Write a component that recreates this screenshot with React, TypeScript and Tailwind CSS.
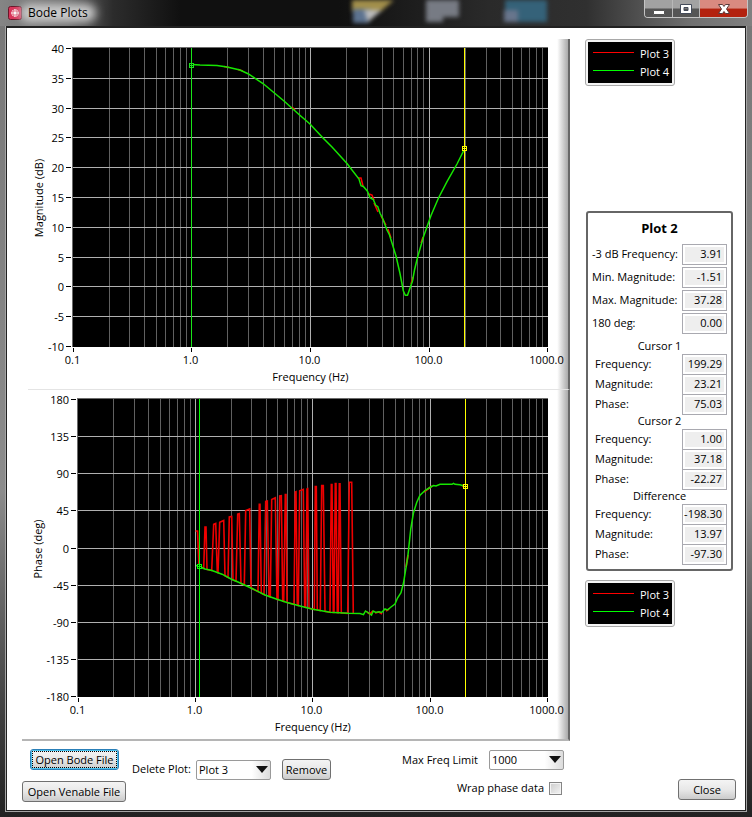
import type { ReactNode } from "react";

type Point = [number, number];

interface Cursor {
  x: number;
  y: number;
  color: string;
}

interface ChartProps {
  label: string;
  viewBox: string;
  left: number;
  decade: number;
  top: number;
  bottom: number;
  yLabels: number[];
  yTitle: { text: string; x: number; y: number };
  cursors: Cursor[];
  children: ReactNode;
}

const X_LABELS = ["0.1", "1.0", "10.0", "100.0", "1000.0"];

const MAGNITUDE: Point[] = [
  [192, 64.5], [200, 65], [217, 65.5], [227, 67], [240, 70], [248, 73.7], [263, 83.5], [284, 101],
  [299, 114.5], [310, 124], [323, 138], [332, 147], [347, 163.5], [359, 179], [361, 185.7], [363.3, 186.5],
  [367.3, 191], [370, 197.7], [373.3, 199.5], [375.7, 205.3], [377.7, 206.5], [380, 213.3], [382.5, 218],
  [387, 230], [389.5, 235], [396, 256], [400, 273.5], [403.3, 290.7], [405.3, 295.3], [407.5, 295.3],
  [409, 291], [412.5, 281], [414.5, 270], [417.5, 257.5], [423.5, 236.7], [431, 215.5], [438.5, 198],
  [447, 181.7], [457, 164], [464, 150],
];

const PHASE: Point[] = [
  [196, 565.5], [199.5, 566.5], [205, 569], [212, 570.5], [222, 574.2], [232, 579.5], [238, 582], [252, 588.5],
  [265, 595], [277, 599.3], [287, 602.5], [300, 606], [313, 609.2], [330, 612.2], [348, 613.3], [360, 613.5],
  [363.5, 614.7], [365.5, 611], [368.5, 613], [371.5, 615], [373.2, 611], [376, 612.5], [379, 611.7], [381.7, 612.5],
  [385, 609], [387.5, 610], [391, 607], [395, 604], [397.5, 598], [401, 592.7], [403.5, 583], [407.8, 556.7],
  [410.8, 528.5], [413.5, 512.7], [416.7, 502.5], [420, 495.3], [425, 490.5], [430.7, 487], [433.5, 485.5],
  [436, 486], [440, 484.3], [452, 484.3], [453.5, 483.3], [455, 484.3], [460, 484.7], [464, 486],
];

// rise start, top left, top right, fall end, y of top left, y of top right
const SPIKES = [
  [203.7, 205, 206, 207, 527, 527],
  [211.7, 213.7, 215.7, 217.3, 524.3, 523.5],
  [218, 219.7, 223.7, 225, 522.3, 520.5],
  [228, 229.3, 231.7, 233, 517, 516.5],
  [236, 237.7, 239.3, 241, 514, 513.5],
  [244.3, 245.7, 249.7, 251, 510.5, 509],
  [258, 259.3, 260, 261.3, 504.3, 504.3],
  [264, 265.7, 267.3, 269, 501.3, 501],
  [270.3, 271.7, 275.3, 277, 499.5, 497.7],
  [278, 279.7, 281.3, 282.7, 496, 495.7],
  [283.7, 285.3, 286, 287, 494.5, 494.5],
  [294, 295.3, 296, 297.3, 492, 491.7],
  [298.3, 299.7, 303.3, 304.7, 490.7, 489.3],
  [305.7, 307, 307.7, 309, 489, 488.7],
  [314.3, 315.3, 316.3, 317.3, 486.5, 486.5],
  [320.3, 321.7, 323.3, 325, 485.5, 485.5],
  [330, 331.3, 332, 333.3, 484.5, 484.5],
  [334, 335.3, 336, 337.3, 483.5, 483.5],
  [338.3, 339.3, 340, 341.3, 483.7, 483.7],
  [347.7, 349.3, 351.7, 353.3, 482.3, 482.3],
];

function toPoints(points: Point[]) {
  return points.map(p => p.join(",")).join(" ");
}

function valueAt(points: Point[], x: number) {
  const i = Math.max(1, points.findIndex(p => p[0] >= x));
  const [x0, y0] = points[i - 1];
  const [x1, y1] = points[i];
  return y0 + ((x - x0) / (x1 - x0)) * (y1 - y0);
}

const WRAPPED: Point[] = [
  [195.5, 531],
  [197.5, 531],
  [199, 566],
  ...SPIKES.flatMap(([a, b, c, d, y0, y1]): Point[] => [
    [a, valueAt(PHASE, a)],
    [b, y0],
    [c, y1],
    [d, valueAt(PHASE, d)],
  ]),
];

function Chart({ label, viewBox, left, decade, top, bottom, yLabels, yTitle, cursors, children }: ChartProps) {
  const right = 548;
  const px = (v: number) => Math.floor(v) + 0.5;
  const tickX = (i: number) => px(left + decade * i);
  const tickY = (i: number) => px(top + ((bottom - top - 1) * i) / (yLabels.length - 1) + 0.5);
  const minor = [0, 1, 2, 3].flatMap(d => [2, 3, 4, 5, 6, 7, 8, 9].map(n => px(left + decade * (d + Math.log10(n)) + 0.3)));

  return (
    <svg viewBox={viewBox} role="img" aria-label={label} className="block w-full font-['Open_Sans',sans-serif] text-[11px]">
      <g shapeRendering="crispEdges">
        <rect x={left - 1} y={top - 1} width={right - left + 1} height={bottom - top + 1} fill="#6b6b6b" />
        <rect x={left} y={top} width={right - left} height={bottom - top} fill="#000" />
        <g stroke="#606060">
          {minor.map(x => <line key={x} x1={x} x2={x} y1={top} y2={bottom} />)}
        </g>
        <g stroke="#b0b0b0">
          {[1, 2, 3].map(i => <line key={i} x1={tickX(i)} x2={tickX(i)} y1={top} y2={bottom} />)}
          {yLabels.slice(1, -1).map((v, i) => <line key={v} x1={left} x2={right} y1={tickY(i + 1)} y2={tickY(i + 1)} />)}
        </g>
        <g stroke="#000">
          {X_LABELS.map((t, i) => <line key={t} x1={tickX(i)} x2={tickX(i)} y1={bottom + 1} y2={bottom + 5} />)}
          {yLabels.map((v, i) => <line key={v} x1={left - 7} x2={left - 2} y1={tickY(i)} y2={tickY(i)} />)}
        </g>
      </g>
      {children}
      <g shapeRendering="crispEdges" fill="none">
        {cursors.map(c => (
          <g key={c.color} stroke={c.color}>
            <line x1={c.x} x2={c.x} y1={top} y2={bottom} />
            <rect x={c.x - 2} y={c.y - 2} width="4" height="4" fill="#000" />
            <path d={`M${c.x - 2} ${c.y}h4M${c.x} ${c.y - 2}v4`} />
          </g>
        ))}
      </g>
      <g textAnchor="end">
        {yLabels.map((v, i) => <text key={v} x={left - 9} y={tickY(i) + 4}>{v}</text>)}
      </g>
      <g textAnchor="middle">
        {X_LABELS.map((t, i) => <text key={t} x={tickX(i) - 1} y={bottom + 17}>{t}</text>)}
        <text x={left + decade * 2} y={bottom + 34}>Frequency (Hz)</text>
        <text transform={`translate(${yTitle.x} ${yTitle.y}) rotate(-90)`}>{yTitle.text}</text>
      </g>
    </svg>
  );
}

function Legend() {
  return (
    <ul className="w-[90px] rounded-[3px] border border-[#a8a8a8] bg-[#f4f4f4] p-[2px] text-[11px] leading-[18px] text-white">
      <li className="flex items-center gap-[6px] bg-black pt-[3px] pl-[5px]">
        <span className="mb-[3px] h-px w-[41px] bg-[#ff0000]" />
        Plot 3
      </li>
      <li className="flex items-center gap-[6px] bg-black pb-[2px] pl-[5px]">
        <span className="mb-[3px] h-px w-[41px] bg-[#00ff00]" />
        Plot 4
      </li>
    </ul>
  );
}

function Reading({ id, label, value }: { id: string; label: string; value: string }) {
  return (
    <div className="flex h-5 items-center justify-between">
      <label htmlFor={id} className="whitespace-nowrap">{label}</label>
      <output id={id} className="h-[21px] w-[45px] shrink-0 border border-[#a9a9b0] bg-white p-[2px]">
        <span className="flex h-full items-center justify-end bg-[#eeeeee] pr-[2px]">{value}</span>
      </output>
    </div>
  );
}

function Readings({ title, values }: { title: string; values: [string, string, string] }) {
  const names = ["Frequency:", "Magnitude:", "Phase:"];
  return (
    <section>
      <h3 className="h-[15px] text-center leading-[13px]">{title}</h3>
      <div className="pl-[3px]">
        {names.map((name, i) => <Reading key={name} id={`${title}-${name}`} label={name} value={values[i]} />)}
      </div>
    </section>
  );
}

function PushButton({ children, className = "border-[#707070]" }: { children: ReactNode; className?: string }) {
  return (
    <button
      type="button"
      className={`h-[21px] rounded-[3px] border bg-linear-to-b from-[#f4f4f4] via-[#e8e8e8] to-[#cbcbcb] text-center leading-[18px] whitespace-nowrap ${className}`}
    >
      {children}
    </button>
  );
}

function DropDown({ id, options }: { id: string; options: string[] }) {
  return (
    <span className="relative block h-5 w-[75px]">
      <select id={id} className="h-full w-full appearance-none rounded-[2px] border border-[#9a9a9a] bg-linear-to-r from-white from-75% to-[#dcdcdc] pl-[2px] leading-[18px]">
        {options.map(o => <option key={o}>{o}</option>)}
      </select>
      <svg viewBox="0 0 12 7" className="pointer-events-none absolute top-[6px] right-[3px] h-[7px] w-3">
        <path d="M0 0h12L6 7z" fill="#111" />
      </svg>
    </span>
  );
}

function TitleBar() {
  return (
    <header className="relative flex h-[26px] items-center overflow-hidden bg-[linear-gradient(to_right,#858585_0%,#6a6a6a_9%,#2c2c2c_15%,#101010_24%,#101010_45%,#2a2a2a_65%,#303030_78%,#707070_92%,#808080_100%)] pl-2">
      <div className="absolute inset-y-0 left-[350px] w-[210px] blur-[2px]">
        <svg viewBox="0 0 210 26" className="h-[26px] w-[210px]">
          <path d="M2 0h42L30 12H2z" fill="#a28f4b" />
          <path d="M3 9h18l-2 14H3z" fill="#5d7390" />
          <path d="M14 10h18L18 22z" fill="#bcbcbc" />
          <path d="M76 0h33v17H93v5H76z" fill="#777b84" />
          <path d="M155 0h42v22h-42z" fill="#356279" />
          <path d="M154 10h14v12h-14z" fill="#68758c" />
        </svg>
      </div>
      <svg viewBox="0 0 14 14" className="mr-[6px] h-[14px] w-[14px]">
        <rect x=".5" y=".5" width="13" height="13" rx="2" fill="#d9355a" stroke="#6b1528" />
        <circle cx="7" cy="7" r="3.500" fill="#e88296" stroke="#f6c9d1" strokeDasharray="1.5 1" />
        <path d="M7 3v8M3 7h8" stroke="#f9dce1" />
        <circle cx="7" cy="7" r="1.200" fill="#fff" />
      </svg>
      <div className="relative">
        <div className="absolute -inset-x-2 -inset-y-px rounded-full bg-[#cccccc] blur-[5px]" />
        <h1 className="relative text-xs leading-4">Bode Plots</h1>
      </div>
      <div className="absolute top-0 right-1 flex h-[18px] w-[104px] overflow-hidden rounded-b-[4px] border border-t-0 border-[#c4c4c4]">
        <button type="button" aria-label="Minimize" className="flex w-7 items-center justify-center border-r border-[#b8b8b8] bg-linear-to-b from-[#a2a2a2] from-45% to-[#555555] to-55%">
          <svg viewBox="0 0 12 14" className="h-[14px] w-3"><rect x=".5" y="8.5" width="11" height="4" rx=".5" fill="#fff" stroke="#555" /></svg>
        </button>
        <button type="button" aria-label="Maximize" className="flex w-[27px] items-center justify-center border-r border-[#b8b8b8] bg-linear-to-b from-[#a2a2a2] from-45% to-[#555555] to-55%">
          <svg viewBox="0 0 12 12" className="h-3 w-3">
            <path fillRule="evenodd" d="M.5 1.5h11v9H.5zM4 4.500h4v3H4z" fill="#fff" stroke="#444b5a" />
          </svg>
        </button>
        <button type="button" aria-label="Close window" className="flex flex-1 items-center justify-center bg-linear-to-b from-[#d98a80] from-45% to-[#b3220f] to-55%">
          <svg viewBox="0 0 14 12" className="h-3 w-[14px]">
            <path d="M1.500 1.500h4L7 3.500 8.500 1.500h4L9.500 6l3 4.500h-4L7 8.500l-1.500 2h-4L4.500 6z" fill="#fff" stroke="#5b3a3a" />
          </svg>
        </button>
      </div>
    </header>
  );
}

export default function App() {
  return (
    <div className="flex min-h-screen flex-col bg-linear-to-b from-[#777777] via-[#8c8c8c] via-60% to-[#222222] font-['Open_Sans',sans-serif] text-[11px] text-black">
      <TitleBar />
      <main className="mx-[6px] mb-[6px] flex flex-1 flex-col border border-t-2 border-[#222222] bg-white pl-[15px] outline outline-[#a5a5a5]">
        <div className="flex pt-[11px]">
          <div className="min-w-0 flex-1">
            <div className="ml-[6px] border-r-2 border-b border-r-[#686868] border-b-[#e4e4e4] bg-linear-to-r from-white from-98% to-[#aaaaaa]">
              <Chart
                label="Magnitude against frequency"
                viewBox="28 39 540 350"
                left={73}
                decade={118.7}
                top={48}
                bottom={347}
                yLabels={[40, 35, 30, 25, 20, 15, 10, 5, 0, -5, -10]}
                yTitle={{ text: "Magnitude (dB)", x: 43, y: 198 }}
                cursors={[
                  { x: 191.5, y: 65.5, color: "#19e619" },
                  { x: 464.5, y: 148.5, color: "#ffff00" },
                ]}
              >
                <g fill="none" strokeWidth="1.5">
                  <path d="M224 66.500l5 1M238 69.500l5 1.500M292 107l3 3M358 178h3l2 8M369 194l3 1 2 5M374 203l4 9M381 216l5 9M388 229l3 9M411 284l2-7M421 243l2-6" stroke="#f00" />
                  <polyline points={toPoints(MAGNITUDE)} stroke="#16e600" />
                </g>
              </Chart>
            </div>
            <div className="border-r-2 border-b-2 border-r-[#686868] border-b-[#b5b5b5] bg-linear-to-r from-white from-98% to-[#aaaaaa]">
              <Chart
                label="Phase against frequency"
                viewBox="22 390 546 349"
                left={78}
                decade={117.4}
                top={399}
                bottom={697}
                yLabels={[180, 135, 90, 45, 0, -45, -90, -135, -180]}
                yTitle={{ text: "Phase (deg)", x: 42, y: 549 }}
                cursors={[
                  { x: 199.5, y: 566.5, color: "#00ff00" },
                  { x: 465.5, y: 486.5, color: "#ffff00" },
                ]}
              >
                <g fill="none">
                  <polyline points={toPoints(WRAPPED)} stroke="#ee0000" strokeWidth="1.6" />
                  <path d="M367 612l3 2 3-3M375 613l4-1 3 2M386 611l3-2M406 567l2-12M424 492l8-6M462 485l2 2" stroke="#f00" strokeWidth="1.8" />
                  <polyline points={toPoints(PHASE)} stroke="#16e600" strokeWidth="1.5" />
                </g>
              </Chart>
            </div>
          </div>

          <aside className="w-[175px] shrink-0 pr-[12px] pl-[15px]">
            <Legend />
            <div className="mt-[125px] mb-[9px] ml-px rounded-[3px] border-2 border-[#666666] bg-white pt-[5px] pr-[4px] pb-[5px] pl-[4px]">
              <h2 className="h-[26px] text-center text-[13px] leading-5 font-bold">Plot 2</h2>
              <div className="flex flex-col gap-[3px] pb-[6px]">
                <Reading id="db3" label="-3 dB Frequency:" value="3.91" />
                <Reading id="min" label="Min. Magnitude:" value="-1.51" />
                <Reading id="max" label="Max. Magnitude:" value="37.28" />
                <Reading id="deg180" label="180 deg:" value="0.00" />
              </div>
              <div className="flex flex-col">
                <Readings title="Cursor 1" values={["199.29", "23.21", "75.03"]} />
                <Readings title="Cursor 2" values={["1.00", "37.18", "-22.27"]} />
                <Readings title="Difference" values={["-198.30", "13.97", "-97.30"]} />
              </div>
            </div>
            <Legend />
          </aside>
        </div>

        <form className="flex items-start pt-2 pr-[9px]">
          <div className="flex w-[104px] flex-col gap-[11px]">
            <PushButton className="ml-2 w-[89px] border-[#2a7fb8] outline-1 -outline-offset-3 outline-dotted outline-black ring-1 ring-inset ring-[#4cc3ee]">
              Open Bode File
            </PushButton>
            <PushButton>Open Venable File</PushButton>
          </div>
          <div className="mt-[10px] ml-[6px] flex items-center">
            <label htmlFor="delete-plot" className="w-16 whitespace-nowrap">Delete Plot:</label>
            <DropDown id="delete-plot" options={["Plot 3", "Plot 4"]} />
            <PushButton className="ml-[11px] w-[49px] border-[#707070]">Remove</PushButton>
          </div>
          <div className="mt-px ml-auto flex flex-col items-end gap-[10px]">
            <div className="flex items-center gap-[11px]">
              <label htmlFor="max-freq">Max Freq Limit</label>
              <DropDown id="max-freq" options={["1000", "100", "10"]} />
            </div>
            <div className="flex items-center gap-[5px] pr-[2px]">
              <label htmlFor="wrap-phase">Wrap phase data</label>
              <input id="wrap-phase" type="checkbox" className="h-[13px] w-[13px] appearance-none border border-[#858585] bg-linear-to-br from-[#cccccc] to-[#f5f5f5] shadow-[inset_0_0_0_1px_#f4f4f4]" />
            </div>
          </div>
          <PushButton className="mt-[30px] ml-[114px] w-[58px] border-[#707070]">Close</PushButton>
        </form>
      </main>
    </div>
  );
}
